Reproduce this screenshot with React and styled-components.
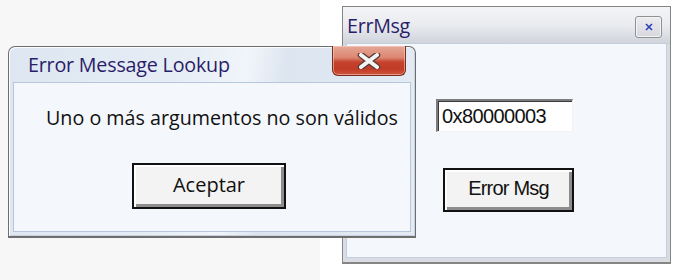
import React from "react";
import styled, { createGlobalStyle } from "styled-components";

const GlobalStyle = createGlobalStyle`
  html, body {
    margin: 0;
    padding: 0;
  }
  body {
    width: 680px;
    height: 280px;
    overflow: hidden;
  }
`;

const Desktop = styled.div`
  position: relative;
  width: 680px;
  height: 280px;
  background: linear-gradient(to right, #f7f7f7 320px, #ffffff 320px);
  overflow: hidden;
`;

const Window = styled.div`
  position: absolute;
  left: ${(p) => p.$x}px;
  top: ${(p) => p.$y}px;
  width: ${(p) => p.$w}px;
  height: ${(p) => p.$h}px;
  box-sizing: border-box;
  display: flex;
  flex-direction: column;
`;

/* ---------- Aero style dialog ---------- */

const AeroFrame = styled(Window)`
  border: 1px solid #6e6e6e;
  border-bottom-width: 2px;
  border-radius: 7px 7px 0 0;
  background: linear-gradient(100deg, #dde6f1 0%, #e6edf5 40%, #f1f5fa 55%, #dce5f0 64%, #e4ebf4 100%);
  box-shadow: inset 1px 1px 0 #fbfcfe, inset -1px -1px 0 #c9d3df;
  padding: 0 4px 4px 4px;
  z-index: 2;
`;

const AeroTitleBar = styled.div`
  position: relative;
  height: 35px;
  display: flex;
  align-items: center;
  padding-left: 15px;
`;

const AeroTitle = styled.span`
  font-family: "Open Sans", "Noto Sans", sans-serif;
  font-size: 19.7px;
  color: #2a1d68;
  letter-spacing: -0.2px;
`;

const RedClose = styled.button`
  position: absolute;
  top: -1px;
  right: 5px;
  width: 74px;
  height: 30px;
  box-sizing: border-box;
  border: 1px solid #7b2a1e;
  border-top: none;
  border-radius: 0 0 6px 6px;
  background: linear-gradient(
    to bottom,
    #e6a797 0%,
    #dc8672 40%,
    #c4432d 55%,
    #c23b26 80%,
    #d0573f 100%
  );
  box-shadow: inset 0 0 0 1px rgba(255, 220, 210, 0.5);
  padding: 0;
  display: flex;
  align-items: center;
  justify-content: center;
`;

const AeroClient = styled.div`
  flex: 1;
  background: #f4f7fc;
  border: 1px solid #b6c6dc;
  display: flex;
  flex-direction: column;
  align-items: flex-start;
  padding: 22px 0 0 32px;
`;

const Message = styled.div`
  font-family: "Open Sans", "Noto Sans", sans-serif;
  font-size: 19.7px;
  line-height: 26px;
  color: #101010;
`;

const ClassicButton = styled.button`
  box-sizing: border-box;
  width: ${(p) => p.$w}px;
  height: ${(p) => p.$h}px;
  margin: ${(p) => p.$m};
  border: 2px solid #111;
  background: #f3f3f3;
  box-shadow: inset 2px 2px 0 #ffffff, inset -3px -3px 0 #8d8d8d;
  padding: 0 0 3px 0;
  font-family: ${(p) =>
    p.$classic ? '"Liberation Sans", Arial, sans-serif' : '"Open Sans", "Noto Sans", sans-serif'};
  font-size: 20px;
  letter-spacing: ${(p) => (p.$classic ? "-0.8px" : "0")};
  color: #111;
`;

/* ---------- Basic themed dialog ---------- */

const BasicFrame = styled(Window)`
  border: 1px solid #858585;
  border-bottom-width: 2px;
  background: linear-gradient(to bottom, #f3f4f7 0px, #e9ebef 18px, #cfd3da 37px, #d9dce2 38px, #d9dce2 100%);
  padding: 0 3px 4px 3px;
  z-index: 1;
`;

const BasicTitleBar = styled.div`
  height: 36px;
  display: flex;
  align-items: center;
  justify-content: space-between;
  padding: 0 5px 0 1px;
`;

const BasicTitle = styled.span`
  font-family: "Open Sans", "Noto Sans", sans-serif;
  font-size: 19.7px;
  color: #2a1d68;
  letter-spacing: -0.3px;
`;

const SmallClose = styled.button`
  width: 27px;
  height: 22px;
  box-sizing: border-box;
  border: 1px solid #8f9090;
  border-radius: 3px;
  background: linear-gradient(to bottom, #ecebef, #d8d7dd);
  box-shadow: inset 0 0 0 1px #f4f4f6;
  padding: 0;
  margin-top: 3px;
  display: flex;
  align-items: center;
  justify-content: center;
`;

const BasicClient = styled.div`
  flex: 1;
  background: #f4f7fc;
  border: 1px solid #c4cfdd;
  display: flex;
  flex-direction: column;
  align-items: center;
  padding-top: 55px;
`;

const HexInput = styled.input`
  box-sizing: border-box;
  width: 137px;
  height: 33px;
  margin-right: 4px;
  border-style: solid;
  border-width: 2px 1px 1px 2px;
  border-color: #7c7c7c #f2f2f2 #f2f2f2 #7c7c7c;
  box-shadow: inset 1px 1px 0 #3a3a3a;
  background: #ffffff;
  padding: 0 0 0 4px;
  font-family: "Liberation Sans", Arial, sans-serif;
  font-size: 20px;
  letter-spacing: -0.6px;
  color: #111;
  outline: none;
`;

const CloseX = () => (
  <svg width="26" height="16" viewBox="0 0 26 16">
    <path
      d="M5 2 L21 14 M21 2 L5 14"
      stroke="#5a3c36"
      strokeWidth="6.5"
      strokeLinecap="round"
    />
    <path
      d="M5 2 L21 14 M21 2 L5 14"
      stroke="#f4f4f4"
      strokeWidth="4"
      strokeLinecap="round"
    />
  </svg>
);

const TinyX = () => (
  <svg width="8" height="8" viewBox="0 0 8 8">
    <path d="M1 1 L7 7 M7 1 L1 7" stroke="#2b3fc0" strokeWidth="1.6" />
  </svg>
);

const App = () => {
  return (
    <>
      <GlobalStyle />
      <Desktop>
        <BasicFrame $x={342} $y={6} $w={329} $h={258}>
          <BasicTitleBar>
            <BasicTitle>ErrMsg</BasicTitle>
            <SmallClose>
              <TinyX />
            </SmallClose>
          </BasicTitleBar>
          <BasicClient>
            <HexInput defaultValue="0x80000003" readOnly />
            <ClassicButton $classic $w={131} $h={44} $m="36px 0 0 4px">
              Error Msg
            </ClassicButton>
          </BasicClient>
        </BasicFrame>

        <AeroFrame $x={8} $y={46} $w={408} $h={192}>
          <AeroTitleBar>
            <AeroTitle>Error Message Lookup</AeroTitle>
            <RedClose>
              <CloseX />
            </RedClose>
          </AeroTitleBar>
          <AeroClient>
            <Message>Uno o más argumentos no son válidos</Message>
            <ClassicButton $w={154} $h={46} $m="32px 0 0 86px">
              Aceptar
            </ClassicButton>
          </AeroClient>
        </AeroFrame>
      </Desktop>
    </>
  );
};

export default App;
